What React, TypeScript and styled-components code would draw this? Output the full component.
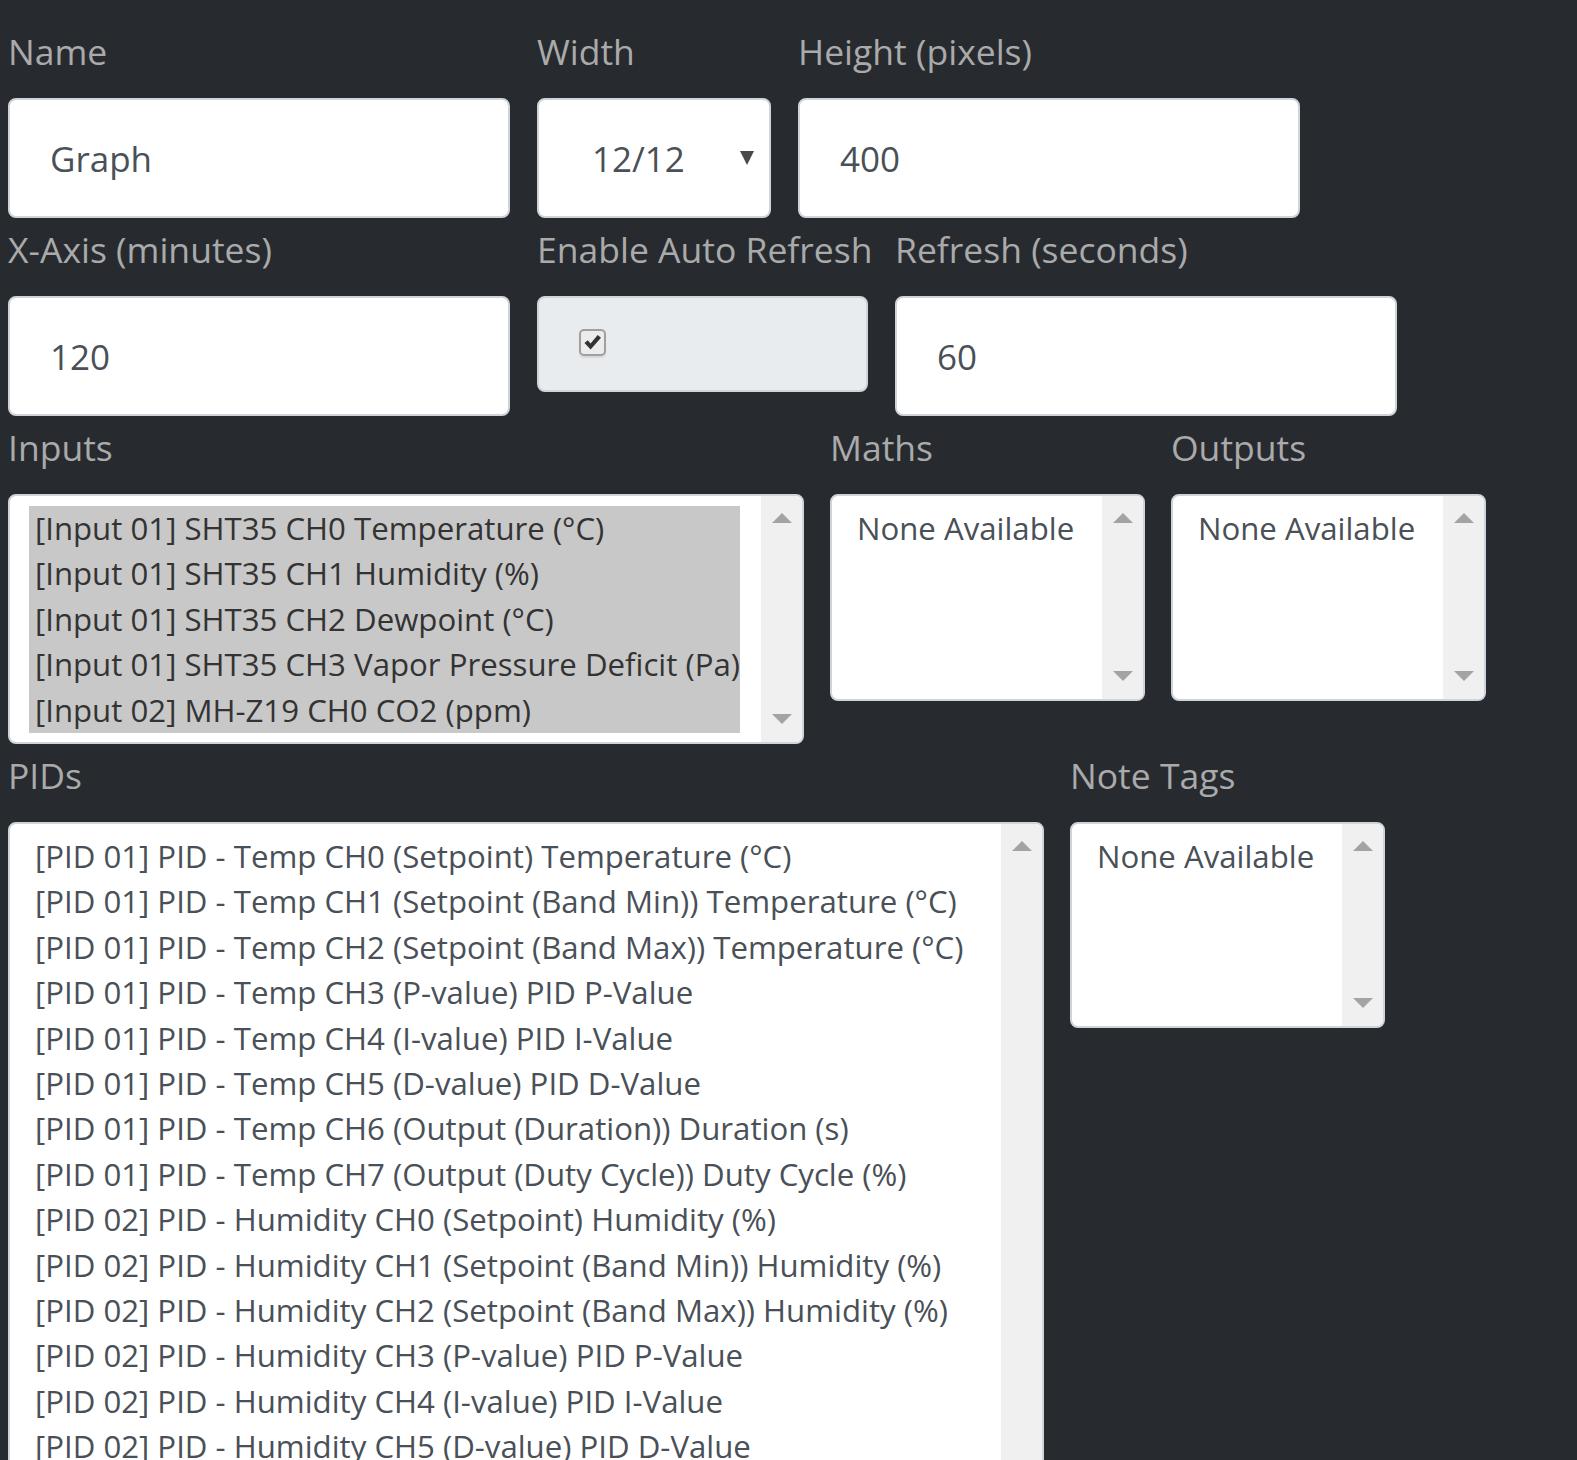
import React from "react";
import styled, { createGlobalStyle } from "styled-components";

const GlobalStyle = createGlobalStyle`
  html, body {
    margin: 0;
    background: #272b30;
    overflow: hidden;
  }
  * { box-sizing: border-box; }
`;

const Page = styled.div`
  padding: 25px 8px 0;
  font-family: "Open Sans", "Noto Sans", sans-serif;
`;

const Row = styled.div<{ $gap: number }>`
  display: flex;
  align-items: flex-start;
  gap: ${(p) => p.$gap}px;
  margin-bottom: 5px;
`;

const Field = styled.div<{ $w: number }>`
  display: flex;
  flex-direction: column;
  width: ${(p) => p.$w}px;
`;

const Label = styled.label`
  color: #aaa;
  font-size: 35.5px;
  line-height: 52px;
  margin-bottom: 21px;
  white-space: nowrap;
`;

const Control = styled.div`
  height: 120px;
  display: flex;
  align-items: center;
  background: #fff;
  border: 2px solid #ced4da;
  border-radius: 8px;
  color: #495057;
  font-size: 35px;
`;

const TextInput = styled(Control)`
  padding: 0 40px;
`;

const Select = styled(Control)`
  padding: 0 15px 0 53px;
  justify-content: space-between;
`;

const Caret = styled.span`
  width: 0;
  height: 0;
  border-left: 7.5px solid transparent;
  border-right: 7.5px solid transparent;
  border-top: 14px solid #4a4a4a;
`;

const CheckWrap = styled.div`
  height: 96px;
  display: flex;
  align-items: center;
  padding: 0 0 4px 40px;
  background: #e9ecef;
  border: 2px solid #ced4da;
  border-radius: 8px;
`;

const CheckBox = styled.span`
  width: 27px;
  height: 27px;
  display: flex;
  align-items: center;
  justify-content: center;
  background: #ececec;
  border: 2px solid #a0a0a0;
  border-radius: 5px;
  box-shadow: 0 2px 1px rgba(0, 0, 0, 0.08);
`;

const ListBox = styled.div<{ $h: number }>`
  height: ${(p) => p.$h}px;
  display: flex;
  background: #fff;
  border: 2px solid #ced4da;
  border-radius: 8px;
  overflow: hidden;
`;

const Options = styled.div`
  flex: 1;
  min-width: 0;
  padding: 10px 21px 10px 19px;
  overflow: hidden;
`;

const Option = styled.div<{ $selected?: boolean }>`
  padding: 0 6px;
  font-size: 31.2px;
  line-height: 45.4px;
  white-space: nowrap;
  color: ${(p) => (p.$selected ? "#333" : "#495057")};
  background: ${(p) => (p.$selected ? "#c8c8c8" : "transparent")};
`;

const ScrollTrack = styled.div`
  width: 41px;
  flex-shrink: 0;
  display: flex;
  flex-direction: column;
  align-items: center;
  justify-content: space-between;
  padding: 17px 0 18px;
  background: #f0f0f0;
`;

const Arrow = styled.span<{ $down?: boolean }>`
  width: 0;
  height: 0;
  border-left: 10px solid transparent;
  border-right: 10px solid transparent;
  ${(p) =>
    p.$down ? "border-top: 10px solid #a3a3a3;" : "border-bottom: 10px solid #a3a3a3;"}
`;

const inputs = [
  "[Input 01] SHT35 CH0 Temperature (°C)",
  "[Input 01] SHT35 CH1 Humidity (%)",
  "[Input 01] SHT35 CH2 Dewpoint (°C)",
  "[Input 01] SHT35 CH3 Vapor Pressure Deficit (Pa)",
  "[Input 02] MH-Z19 CH0 CO2 (ppm)",
];

const pids = [
  "[PID 01] PID - Temp CH0 (Setpoint) Temperature (°C)",
  "[PID 01] PID - Temp CH1 (Setpoint (Band Min)) Temperature (°C)",
  "[PID 01] PID - Temp CH2 (Setpoint (Band Max)) Temperature (°C)",
  "[PID 01] PID - Temp CH3 (P-value) PID P-Value",
  "[PID 01] PID - Temp CH4 (I-value) PID I-Value",
  "[PID 01] PID - Temp CH5 (D-value) PID D-Value",
  "[PID 01] PID - Temp CH6 (Output (Duration)) Duration (s)",
  "[PID 01] PID - Temp CH7 (Output (Duty Cycle)) Duty Cycle (%)",
  "[PID 02] PID - Humidity CH0 (Setpoint) Humidity (%)",
  "[PID 02] PID - Humidity CH1 (Setpoint (Band Min)) Humidity (%)",
  "[PID 02] PID - Humidity CH2 (Setpoint (Band Max)) Humidity (%)",
  "[PID 02] PID - Humidity CH3 (P-value) PID P-Value",
  "[PID 02] PID - Humidity CH4 (I-value) PID I-Value",
  "[PID 02] PID - Humidity CH5 (D-value) PID D-Value",
  "[PID 02] PID - Humidity CH6 (Output (Duration)) Duration (s)",
  "[PID 02] PID - Humidity CH7 (Output (Duty Cycle)) Duty Cycle (%)",
];

type MultiSelectProps = {
  items: string[];
  height: number;
  selected?: boolean;
};

const MultiSelect = ({ items, height, selected }: MultiSelectProps) => (
  <ListBox $h={height}>
    <Options>
      {items.map((item) => (
        <Option key={item} $selected={selected}>
          {item}
        </Option>
      ))}
    </Options>
    <ScrollTrack>
      <Arrow />
      <Arrow $down />
    </ScrollTrack>
  </ListBox>
);

const CheckMark = () => (
  <svg width="19" height="17" viewBox="0 0 20 18">
    <path d="M1.5 9.5 L5 6.5 L8 10 L15.5 1 L19 4 L8 16.5 Z" fill="#333" />
  </svg>
);

export default function App() {
  return (
    <Page>
      <GlobalStyle />
      <Row $gap={27}>
        <Field $w={502}>
          <Label>Name</Label>
          <TextInput>Graph</TextInput>
        </Field>
        <Field $w={234}>
          <Label>Width</Label>
          <Select>
            <span>12/12</span>
            <Caret />
          </Select>
        </Field>
        <Field $w={502}>
          <Label>Height (pixels)</Label>
          <TextInput>400</TextInput>
        </Field>
      </Row>
      <Row $gap={27}>
        <Field $w={502}>
          <Label>X-Axis (minutes)</Label>
          <TextInput>120</TextInput>
        </Field>
        <Field $w={331}>
          <Label>Enable Auto Refresh</Label>
          <CheckWrap>
            <CheckBox>
              <CheckMark />
            </CheckBox>
          </CheckWrap>
        </Field>
        <Field $w={502}>
          <Label>Refresh (seconds)</Label>
          <TextInput>60</TextInput>
        </Field>
      </Row>
      <Row $gap={26}>
        <Field $w={796}>
          <Label>Inputs</Label>
          <MultiSelect items={inputs} height={250} selected />
        </Field>
        <Field $w={315}>
          <Label>Maths</Label>
          <MultiSelect items={["None Available"]} height={207} />
        </Field>
        <Field $w={315}>
          <Label>Outputs</Label>
          <MultiSelect items={["None Available"]} height={207} />
        </Field>
      </Row>
      <Row $gap={26}>
        <Field $w={1036}>
          <Label>PIDs</Label>
          <MultiSelect items={pids} height={760} />
        </Field>
        <Field $w={315}>
          <Label>Note Tags</Label>
          <MultiSelect items={["None Available"]} height={206} />
        </Field>
      </Row>
    </Page>
  );
}
